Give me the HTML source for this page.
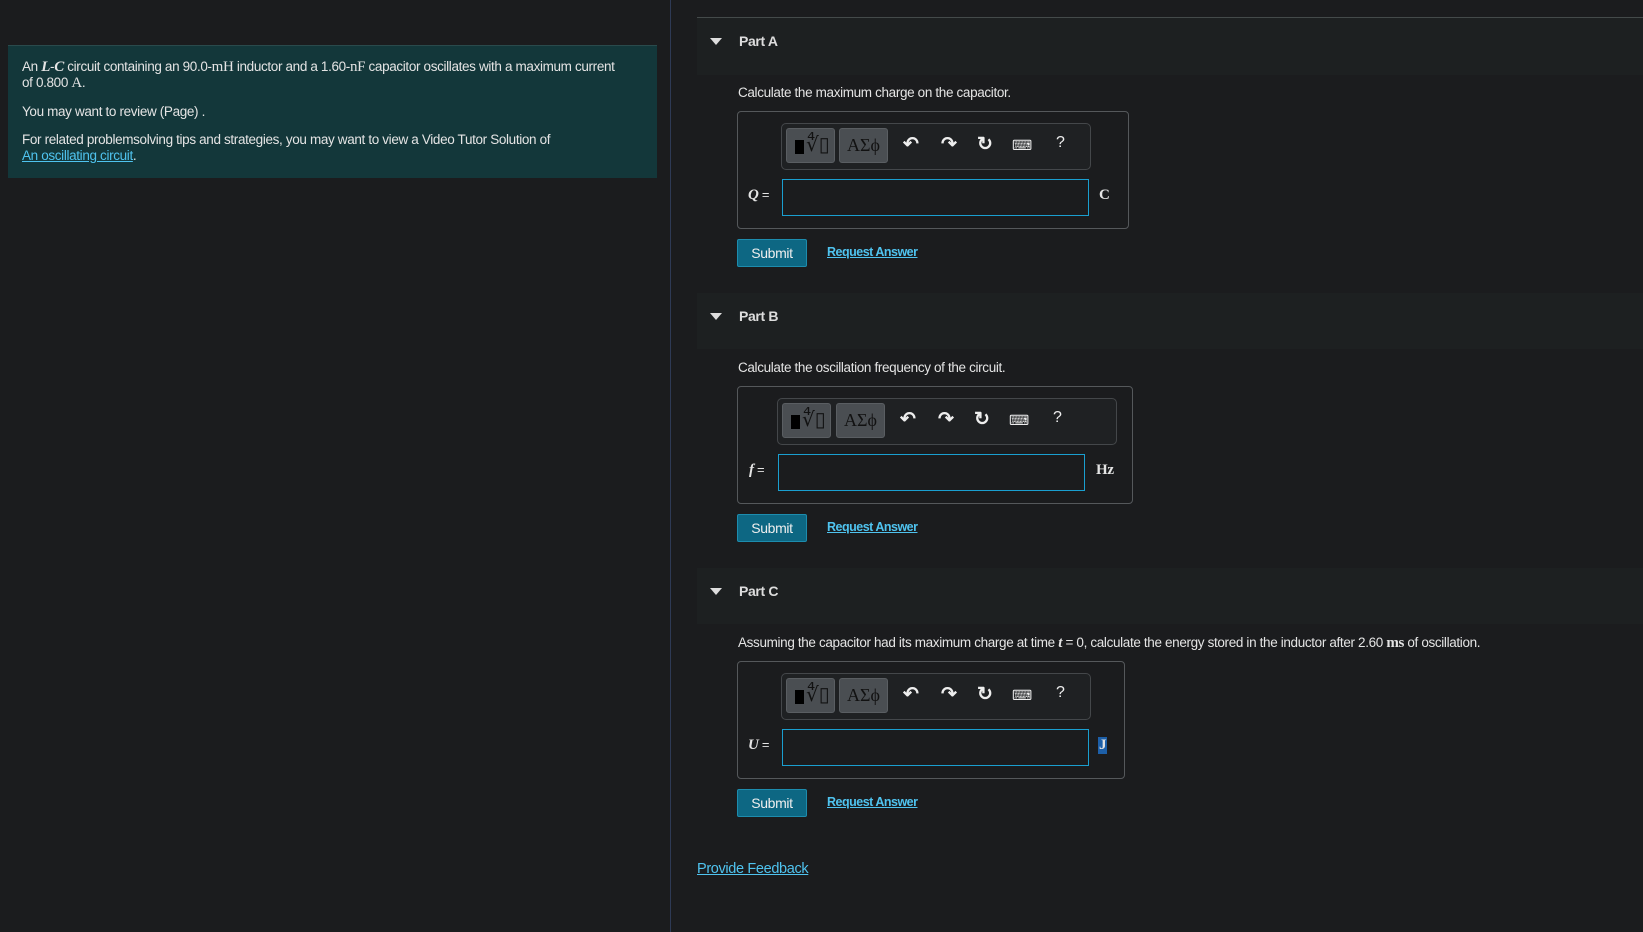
<!DOCTYPE html>
<html><head><meta charset="utf-8"><style>
body{margin:0;width:1643px;height:932px;background:#1b1c1e;position:relative;overflow:hidden;font-family:"Liberation Sans",Arial,sans-serif;color:#e4e4e4;font-size:13.5px;letter-spacing:-0.35px}
.a{position:absolute}
.lp{left:8px;top:45px;width:649px;height:132px;background:#13373a;border-top:1px solid #2a4a4c}
.lp p{margin:0;position:absolute;left:14px;line-height:16px}
.m{font-family:"Liberation Serif",serif;font-size:15px}
.mi{font-family:"Liberation Serif",serif;font-style:italic;font-size:15px;font-weight:bold}
a,.lk{color:#4fc3ef;text-decoration:underline}
.div{left:670px;top:0;width:1px;height:932px;background:#2e3a55}
.band{left:697px;width:946px;height:56px;background:#1d2021}
.band.t{border-top:1px solid #444a4a}
.tri{width:0;height:0;border-left:6px solid transparent;border-right:6px solid transparent;border-top:7px solid #ddd}
.ph{font-weight:bold;font-size:14px;color:#ddd}
.box{border:1px solid #55585b;border-radius:4px}
.tb{border:1px solid #44474a;border-radius:5px;background:#1f2123;height:45px}
.btn{position:absolute;top:5px;width:47px;height:33px;background:#4a4e52;border-radius:3px;border:1px solid #5a5e62;letter-spacing:0}
.inp{border:1px solid #1a9fd0;height:35px}
.sub{width:68px;height:26px;background:#0d6783;border:1px solid #1d8cae;color:#eee;font-size:14px;text-align:center;line-height:26px;border-radius:2px}
.ra{font-weight:bold;font-size:12.5px;color:#4fc3ef;text-decoration:underline;letter-spacing:-0.5px}
.ic{position:absolute;color:#eee;font-size:19px;font-weight:bold;letter-spacing:0}
</style></head><body>
<div class="a lp">
<p style="top:13px">An <span class="mi">L</span>-<span class="mi">C</span> circuit containing an 90.0-<span class="m">mH</span> inductor and a 1.60-<span class="m">nF</span> capacitor oscillates with a maximum current<br>of 0.800 <span class="m">A</span>.</p>
<p style="top:58px">You may want to review (Page) .</p>
<p style="top:86px">For related problemsolving tips and strategies, you may want to view a Video Tutor Solution of<br><a>An oscillating circuit</a>.</p>
</div>
<div class="a div"></div>

<div class="a band t" style="top:17px;height:57px"></div>
<div class="a tri" style="left:710px;top:38px"></div>
<div class="a ph" style="left:739px;top:33px">Part A</div>
<div class="a" style="left:738px;top:85px">Calculate the maximum charge on the capacitor.</div>
<div class="a box" style="left:737px;top:111px;width:390px;height:116px"></div>
<div class="a tb" style="left:781px;top:123px;width:308px"></div>
<div class="a btn" style="left:786px;top:128px"><span class="a" style="left:8px;top:11px;width:9px;height:14px;background:#000"></span><span class="a" style="left:19px;top:3px;font-size:20px;color:#111;font-family:'Liberation Serif'">∜▯</span></div>
<div class="a btn" style="left:839px;top:128px;font-family:'Liberation Serif';font-size:18px;color:#111;text-align:center;line-height:33px">ΑΣϕ</div>
<div class="a ic" style="left:903px;top:133px">↶</div><div class="a ic" style="left:941px;top:133px">↷</div><div class="a ic" style="left:977px;top:133px">↻</div><div class="a ic" style="left:1012px;top:137px;font-size:14px;font-weight:normal">⌨</div><div class="a ic" style="left:1056px;top:134px;font-size:16px;font-weight:normal">?</div>
<div class="a mi" style="left:748px;top:187px">Q <span style="font-style:normal;font-weight:normal;font-family:'Liberation Sans';font-size:13px">=</span></div>
<div class="a inp" style="left:782px;top:179px;width:305px"></div>
<div class="a m" style="left:1099px;top:187px;font-weight:bold">C</div>
<div class="a sub" style="left:737px;top:239px">Submit</div>
<div class="a ra" style="left:827px;top:245px">Request Answer</div>

<div class="a band" style="top:293px"></div>
<div class="a tri" style="left:710px;top:313px"></div>
<div class="a ph" style="left:739px;top:308px">Part B</div>
<div class="a" style="left:738px;top:360px">Calculate the oscillation frequency of the circuit.</div>
<div class="a box" style="left:737px;top:386px;width:394px;height:116px"></div>
<div class="a tb" style="left:777px;top:398px;width:338px"></div>
<div class="a btn" style="left:782px;top:403px"><span class="a" style="left:8px;top:11px;width:9px;height:14px;background:#000"></span><span class="a" style="left:19px;top:3px;font-size:20px;color:#111;font-family:'Liberation Serif'">∜▯</span></div>
<div class="a btn" style="left:836px;top:403px;font-family:'Liberation Serif';font-size:18px;color:#111;text-align:center;line-height:33px">ΑΣϕ</div>
<div class="a ic" style="left:900px;top:408px">↶</div><div class="a ic" style="left:938px;top:408px">↷</div><div class="a ic" style="left:974px;top:408px">↻</div><div class="a ic" style="left:1009px;top:412px;font-size:14px;font-weight:normal">⌨</div><div class="a ic" style="left:1053px;top:409px;font-size:16px;font-weight:normal">?</div>
<div class="a mi" style="left:749px;top:462px">f <span style="font-style:normal;font-weight:normal;font-family:'Liberation Sans';font-size:13px">=</span></div>
<div class="a inp" style="left:778px;top:454px;width:305px"></div>
<div class="a m" style="left:1096px;top:462px;font-weight:bold">Hz</div>
<div class="a sub" style="left:737px;top:514px">Submit</div>
<div class="a ra" style="left:827px;top:520px">Request Answer</div>

<div class="a band" style="top:568px"></div>
<div class="a tri" style="left:710px;top:588px"></div>
<div class="a ph" style="left:739px;top:583px">Part C</div>
<div class="a" style="left:738px;top:635px">Assuming the capacitor had its maximum charge at time <span class="mi">t</span> = 0, calculate the energy stored in the inductor after 2.60 <span class="m" style="font-weight:bold">ms</span> of oscillation.</div>
<div class="a box" style="left:737px;top:661px;width:386px;height:116px"></div>
<div class="a tb" style="left:781px;top:673px;width:308px"></div>
<div class="a btn" style="left:786px;top:678px"><span class="a" style="left:8px;top:11px;width:9px;height:14px;background:#000"></span><span class="a" style="left:19px;top:3px;font-size:20px;color:#111;font-family:'Liberation Serif'">∜▯</span></div>
<div class="a btn" style="left:839px;top:678px;font-family:'Liberation Serif';font-size:18px;color:#111;text-align:center;line-height:33px">ΑΣϕ</div>
<div class="a ic" style="left:903px;top:683px">↶</div><div class="a ic" style="left:941px;top:683px">↷</div><div class="a ic" style="left:977px;top:683px">↻</div><div class="a ic" style="left:1012px;top:687px;font-size:14px;font-weight:normal">⌨</div><div class="a ic" style="left:1056px;top:684px;font-size:16px;font-weight:normal">?</div>
<div class="a mi" style="left:748px;top:737px">U <span style="font-style:normal;font-weight:normal;font-family:'Liberation Sans';font-size:13px">=</span></div>
<div class="a inp" style="left:782px;top:729px;width:305px"></div>
<div class="a m" style="left:1098px;top:737px;font-weight:bold;background:#1d5fa8;padding:0 1px">J</div>
<div class="a sub" style="left:737px;top:789px">Submit</div>
<div class="a ra" style="left:827px;top:795px">Request Answer</div>

<div class="a" style="left:697px;top:861px;font-size:14.5px"><a>Provide Feedback</a></div>
</body></html>
